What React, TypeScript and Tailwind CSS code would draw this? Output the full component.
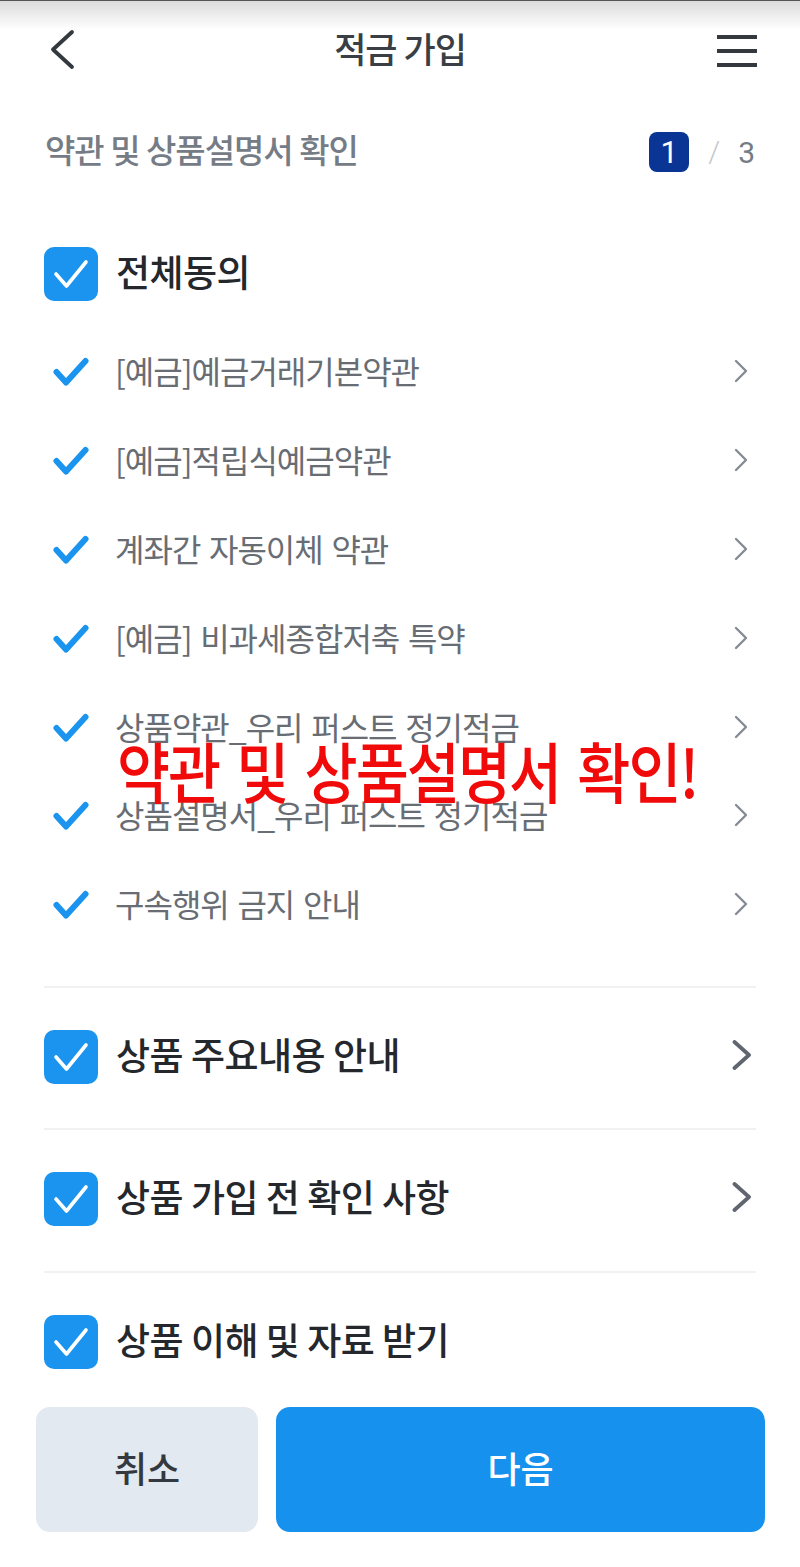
const font = { fontFamily: '"Noto Sans CJK KR", "Noto Sans", sans-serif' }

const terms = [
  '[예금]예금거래기본약관',
  '[예금]적립식예금약관',
  '계좌간 자동이체 약관',
  '[예금] 비과세종합저축 특약',
  '상품약관_우리 퍼스트 정기적금',
  '상품설명서_우리 퍼스트 정기적금',
  '구속행위 금지 안내',
]

function BoxCheck() {
  return (
    <div className="w-[54px] h-[54px] rounded-[10px] bg-[#1a94ee] shrink-0">
      <svg width="54" height="54" viewBox="0 0 54 54" fill="none">
        <path d="M12 27 L22.5 39 L42 15" stroke="#fff" strokeWidth="3.6" strokeLinecap="round" strokeLinejoin="round" />
      </svg>
    </div>
  )
}

function Chevron({ size = 'sm' }: { size?: 'sm' | 'lg' }) {
  if (size === 'lg') {
    return (
      <svg width="20" height="30" viewBox="0 0 20 30" fill="none">
        <path d="M2.5 2 L17 15 L2.5 28" stroke="#5f6670" strokeWidth="3.8" strokeLinecap="round" strokeLinejoin="round" />
      </svg>
    )
  }
  return (
    <svg width="14" height="24" viewBox="0 0 14 24" fill="none">
      <path d="M2 2 L12 12 L2 22" stroke="#868c94" strokeWidth="2.4" strokeLinecap="round" strokeLinejoin="round" />
    </svg>
  )
}

function Section({ label, arrow = true }: { label: string; arrow?: boolean }) {
  return (
    <div className="flex items-center h-[54px]">
      <BoxCheck />
      <span className="ml-[18px] text-[37px] font-medium tracking-[-0.5px] text-[#24282d] leading-none -mt-[5px]">{label}</span>
      {arrow && (
        <span className="ml-auto mr-[4px] flex -mt-[3px]">
          <Chevron size="lg" />
        </span>
      )}
    </div>
  )
}

export default function App() {
  return (
    <div className="relative w-[800px] h-[1567px] bg-white overflow-hidden flex flex-col" style={font}>
      <div className="h-[30px] shrink-0 bg-gradient-to-b from-[#dcdcdc] to-white border-t-[1px] border-[#555]" />

      <header className="h-[40px] mt-[1px] pl-[49px] pr-[43px] flex items-center justify-between shrink-0">
        <svg width="26" height="42" viewBox="0 0 26 42" fill="none" className="-mt-[2px]">
          <path d="M23 3 L4 20.5 L23 38" stroke="#33393f" strokeWidth="3.8" strokeLinecap="round" strokeLinejoin="round" />
        </svg>
        <h1 className="ml-[8px] text-[35px] font-medium tracking-[-1px] text-[#3a3f45] leading-none -mt-[7px]">적금 가입</h1>
        <div className="w-[40px] flex flex-col gap-[10px]">
          <div className="h-[4px] bg-[#33393f]" />
          <div className="h-[4px] bg-[#33393f]" />
          <div className="h-[4px] bg-[#33393f]" />
        </div>
      </header>

      <div className="mt-[60px] h-[42px] pl-[45px] pr-[45px] flex items-center justify-between shrink-0">
        <span className="text-[33px] font-medium tracking-[-1px] text-[#767c85] leading-none -mt-[5px]">약관 및 상품설명서 확인</span>
        <div className="flex items-center font-['Roboto']">
          <span className="w-[40px] h-[40px] rounded-[8px] bg-[#0a3595] text-white text-[31px] leading-none flex items-center justify-center">1</span>
          <span className="ml-[19px] text-[30px] text-[#c4c8cc] leading-none font-light">/</span>
          <span className="ml-[18px] mt-[1px] text-[30px] text-[#767c85] leading-none">3</span>
        </div>
      </div>

      <div className="mt-[74px] pl-[44px] pr-[44px] shrink-0">
        <Section label="전체동의" arrow={false} />
      </div>

      <ul className="mt-[26px] shrink-0">
        {terms.map(t => (
          <li key={t} className="h-[88.8px] pl-[53px] pr-[52px] flex items-center">
            <svg width="36" height="30" viewBox="0 0 36 30" fill="none" className="shrink-0 mt-[2px]">
              <path d="M3.5 15 L13 25.5 L32.5 4" stroke="#1a94ee" strokeWidth="6" strokeLinecap="round" strokeLinejoin="round" />
            </svg>
            <span className="ml-[26px] text-[32px] tracking-[-1px] [word-spacing:2.5px] text-[#686d74] leading-none whitespace-nowrap -mt-[2px]">{t}</span>
            <span className="ml-auto flex">
              <Chevron />
            </span>
          </li>
        ))}
      </ul>

      <div className="mt-[37px] mx-[44px] shrink-0">
        <div className="border-t-2 border-[#f0f1f3] pt-[42px] pb-[44px]">
          <Section label="상품 주요내용 안내" />
        </div>
        <div className="border-t-2 border-[#f0f1f3] pt-[42px] pb-[45px]">
          <Section label="상품 가입 전 확인 사항" />
        </div>
        <div className="border-t-2 border-[#f0f1f3] pt-[42px]">
          <Section label="상품 이해 및 자료 받기" arrow={false} />
        </div>
      </div>

      <div className="mt-[38px] pl-[36px] pr-[35px] flex gap-[18px] shrink-0">
        <button className="w-[222px] h-[125px] pb-[5px] rounded-[14px] bg-[#e3e9f1] text-[36px] font-medium text-[#33393f]">취소</button>
        <button className="flex-1 h-[125px] pb-[5px] rounded-[14px] bg-[#1791ee] text-[36px] font-medium text-white">다음</button>
      </div>

      {/* hand written note on top of the list */}
      <div className="absolute left-[117px] top-[729px] text-[66px] font-medium tracking-[-2.3px] [word-spacing:7px] text-[#f00a0a] leading-[80px] whitespace-nowrap origin-left scale-x-[0.875]">
        약관 및 상품설명서 확인!
      </div>
    </div>
  )
}
